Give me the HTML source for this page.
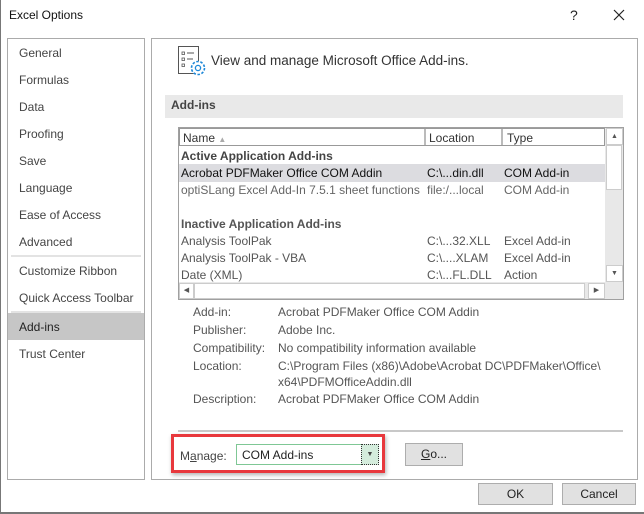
<!DOCTYPE html>
<html><head><style>
*{margin:0;padding:0;box-sizing:border-box}
body{width:644px;height:514px;background:#fff;font-family:"Liberation Sans",sans-serif;font-size:12px;color:#333;position:relative;overflow:hidden}
.a{position:absolute;white-space:nowrap}
.nav{left:19px;color:#444}
.r{position:absolute;left:181px;white-space:nowrap;color:#333}
.c2{position:absolute;left:427px}
.c3{position:absolute;left:504px}
.lab{left:193px;color:#555}
.val{left:278px;color:#555}
.btn{position:absolute;background:#e1e1e1;border:1px solid #adadad;text-align:center;line-height:20px;color:#222}
</style></head><body>
<div class="a" style="left:0;top:0;width:1px;height:514px;background:#777"></div>
<div class="a" style="left:0;top:512px;width:644px;height:2px;background:#777"></div>
<div class="a" style="left:9px;top:8px;font-size:12px;color:#111">Excel Options</div>
<div class="a" style="left:570px;top:7px;font-size:14px;color:#222">?</div>
<svg class="a" style="left:613px;top:9px" width="12" height="12"><path d="M1 1L11 11M11 1L1 11" stroke="#222" stroke-width="1.2"/></svg>

<div class="a" style="left:7px;top:38px;width:138px;height:442px;border:1px solid #ababab"></div>
<div class="a nav" style="top:46px">General</div>
<div class="a nav" style="top:73px">Formulas</div>
<div class="a nav" style="top:100px">Data</div>
<div class="a nav" style="top:127px">Proofing</div>
<div class="a nav" style="top:154px">Save</div>
<div class="a nav" style="top:181px">Language</div>
<div class="a nav" style="top:208px">Ease of Access</div>
<div class="a nav" style="top:235px">Advanced</div>
<div class="a" style="left:11px;top:255px;width:130px;height:2px;background:#e3e3e3"></div>
<div class="a nav" style="top:264px">Customize Ribbon</div>
<div class="a nav" style="top:291px">Quick Access Toolbar</div>
<div class="a" style="left:11px;top:311px;width:130px;height:2px;background:#e3e3e3"></div>
<div class="a" style="left:8px;top:313px;width:136px;height:27px;background:#c6c6c6"></div>
<div class="a nav" style="top:320px;color:#222">Add-ins</div>
<div class="a nav" style="top:347px">Trust Center</div>

<div class="a" style="left:151px;top:38px;width:487px;height:442px;border:1px solid #ababab"></div>
<svg class="a" style="left:177px;top:45px" width="30" height="32">
<rect x="1.5" y="1.5" width="20" height="27" fill="#fff" stroke="#555"/>
<rect x="5" y="7" width="2.5" height="2.5" fill="none" stroke="#555" stroke-width=".8"/><path d="M10 8h7" stroke="#555"/>
<rect x="5" y="13" width="2.5" height="2.5" fill="none" stroke="#555" stroke-width=".8"/><path d="M10 14h6" stroke="#555"/>
<rect x="5" y="19" width="2.5" height="2.5" fill="none" stroke="#555" stroke-width=".8"/>
<circle cx="21" cy="23" r="7" fill="#fff"/>
<circle cx="21" cy="23" r="6.5" fill="none" stroke="#1e88d8" stroke-width="1.6" stroke-dasharray="2.5 1.6"/>
<circle cx="21" cy="23" r="2.6" fill="none" stroke="#1e88d8" stroke-width="1.3"/>
</svg>
<div class="a" style="left:211px;top:53px;font-size:13.5px;color:#333">View and manage Microsoft Office Add-ins.</div>
<div class="a" style="left:165px;top:95px;width:458px;height:23px;background:#e9e9e9"></div>
<div class="a" style="left:171px;top:98px;font-weight:bold;color:#444">Add-ins</div>

<div class="a" style="left:178px;top:127px;width:446px;height:173px;border:1px solid #a0a0a0"></div>
<div class="a" style="left:179px;top:128px;width:426px;height:18px;border:1px solid #999;background:#fff"></div>
<div class="a" style="left:424px;top:129px;width:2px;height:16px;background:#bbb"></div>
<div class="a" style="left:501px;top:129px;width:2px;height:16px;background:#bbb"></div>
<div class="a" style="left:183px;top:131px">Name <span style="color:#aaa;font-size:8px">▲</span></div>
<div class="a" style="left:429px;top:131px">Location</div>
<div class="a" style="left:507px;top:131px">Type</div>
<div class="a" style="left:605px;top:128px;width:18px;height:171px;background:#e8e8e8"></div>
<div class="a" style="left:606px;top:128px;width:17px;height:17px;background:#fff;border:1px solid #ccc;font-size:7px;text-align:center;line-height:15px;color:#555">▲</div>
<div class="a" style="left:606px;top:145px;width:16px;height:45px;background:#fff;border:1px solid #ccc"></div>
<div class="a" style="left:606px;top:265px;width:17px;height:17px;background:#fff;border:1px solid #ccc;font-size:7px;text-align:center;line-height:15px;color:#555">▼</div>
<div class="r" style="top:149px;font-weight:bold;color:#444">Active Application Add-ins</div>
<div class="a" style="left:179px;top:164px;width:426px;height:18px;background:#dcdce0"></div>
<div class="r" style="top:166px;color:#111;width:420px">Acrobat PDFMaker Office COM Addin<span class="c2" style="left:246px">C:\...din.dll</span><span class="c3" style="left:323px">COM Add-in</span></div>
<div class="r" style="top:183px;color:#666">optiSLang Excel Add-In 7.5.1 sheet functions<span class="c2" style="left:246px">file:/...local</span><span class="c3" style="left:323px">COM Add-in</span></div>
<div class="r" style="top:217px;font-weight:bold;color:#555">Inactive Application Add-ins</div>
<div class="r" style="top:234px;color:#555">Analysis ToolPak<span class="c2" style="left:246px">C:\...32.XLL</span><span class="c3" style="left:323px">Excel Add-in</span></div>
<div class="r" style="top:251px;color:#555">Analysis ToolPak - VBA<span class="c2" style="left:246px">C:\....XLAM</span><span class="c3" style="left:323px">Excel Add-in</span></div>
<div class="r" style="top:268px;color:#555">Date (XML)<span class="c2" style="left:246px">C:\...FL.DLL</span><span class="c3" style="left:323px">Action</span></div>
<div class="a" style="left:179px;top:282px;width:426px;height:17px;background:#e8e8e8"></div>
<div class="a" style="left:179px;top:283px;width:15px;height:16px;background:#fff;border:1px solid #ccc;font-size:7px;line-height:14px;text-align:center;color:#555">◀</div>
<div class="a" style="left:194px;top:283px;width:391px;height:16px;background:#fff;border:1px solid #ccc"></div>
<div class="a" style="left:588px;top:283px;width:17px;height:16px;background:#fff;border:1px solid #ccc;font-size:7px;line-height:14px;text-align:center;color:#555">▶</div>

<div class="a lab" style="top:305px">Add-in:</div><div class="a val" style="top:305px">Acrobat PDFMaker Office COM Addin</div>
<div class="a lab" style="top:323px">Publisher:</div><div class="a val" style="top:323px">Adobe Inc.</div>
<div class="a lab" style="top:341px">Compatibility:</div><div class="a val" style="top:341px">No compatibility information available</div>
<div class="a lab" style="top:359px">Location:</div><div class="a val" style="top:359px">C:\Program Files (x86)\Adobe\Acrobat DC\PDFMaker\Office\</div>
<div class="a val" style="top:375px">x64\PDFMOfficeAddin.dll</div>
<div class="a lab" style="top:392px">Description:</div><div class="a val" style="top:392px">Acrobat PDFMaker Office COM Addin</div>

<div class="a" style="left:178px;top:430px;width:445px;height:2px;background:#c8c8c8"></div>
<div class="a" style="left:171px;top:434px;width:214px;height:39px;border:3px solid #e8383d;box-shadow:1px 2px 4px rgba(0,0,0,.3)"></div>
<div class="a" style="left:180px;top:449px;color:#444">M<u>a</u>nage:</div>
<div class="a" style="left:236px;top:444px;width:143px;height:21px;border:1px solid #7fc795;background:#fff"></div>
<div class="a" style="left:242px;top:448px;color:#222">COM Add-ins</div>
<div class="a" style="left:361px;top:444px;width:18px;height:21px;background:#d4ecdc;border:1px dotted #333;font-size:7px;text-align:center;line-height:19px;color:#444">▼</div>
<div class="btn" style="left:405px;top:443px;width:58px;height:23px"><u>G</u>o...</div>
<div class="btn" style="left:478px;top:483px;width:75px;height:22px">OK</div>
<div class="btn" style="left:562px;top:483px;width:74px;height:22px">Cancel</div>
</body></html>
